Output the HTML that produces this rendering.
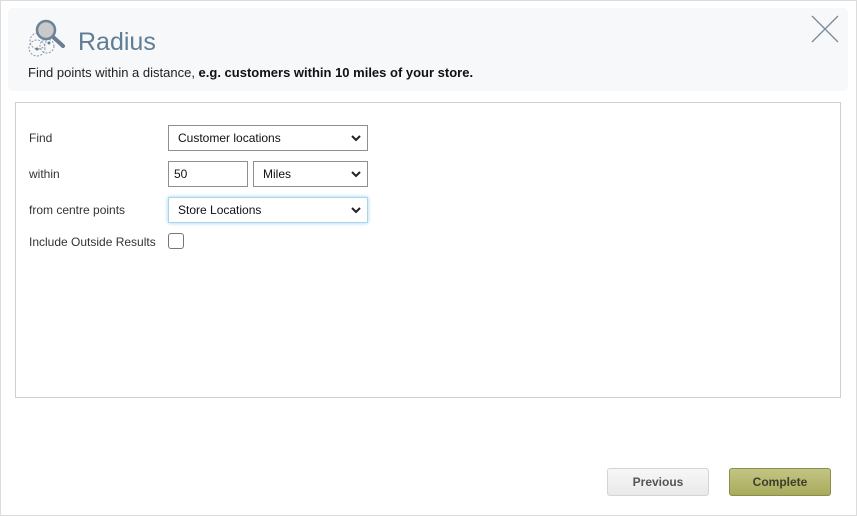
<!DOCTYPE html>
<html><head><meta charset="utf-8"><style>
*{box-sizing:border-box;margin:0;padding:0}
body{width:857px;height:516px;background:#fff;font-family:"Liberation Sans",Arial,sans-serif;position:relative;overflow:hidden}
.frame{position:absolute;left:0;top:0;width:857px;height:516px;border:1px solid #dcdcdc}
.hdr{position:absolute;left:8px;top:8px;width:840px;height:83px;background:#f6f8fa;border-radius:4px}
.title{position:absolute;left:78px;top:28px;font-size:25px;color:#5f7d95}
.sub{position:absolute;left:28px;top:65px;font-size:13px;color:#222}
.sub b{color:#111}
.box{position:absolute;left:15px;top:102px;width:826px;height:296px;border:1px solid #cfcfcf}
.lbl{position:absolute;left:29px;font-size:12px;color:#333}
.sel,.inp{position:absolute;height:26px;border:1px solid #8f8f8f;background:#fff;font-size:12px;color:#111;padding:0 9px;line-height:24px}
.sel svg{position:absolute;right:6px;top:9px}
.btn{position:absolute;top:468px;height:28px;border-radius:3px;font-size:12px;font-weight:bold;text-align:center;line-height:26px}
</style></head><body>
<div class="frame"></div>
<div class="hdr"></div>
<svg style="position:absolute;left:27px;top:19px" width="40" height="38" viewBox="0 0 40 38">
<circle cx="11" cy="22" r="8" fill="none" stroke="#8a99a8" stroke-dasharray="2 1.5"/>
<circle cx="10" cy="29" r="8" fill="none" stroke="#8a99a8" stroke-dasharray="2 1.5"/>
<circle cx="20" cy="27" r="7" fill="none" stroke="#8a99a8" stroke-dasharray="2 1.5"/>
<circle cx="10" cy="30" r="1.5" fill="#6b7d90"/><circle cx="22" cy="24" r="1.5" fill="#6b7d90"/><circle cx="13" cy="15" r="1.5" fill="#6b7d90"/>
<line x1="25" y1="17" x2="36" y2="27" stroke="#6b7d90" stroke-width="4" stroke-linecap="round"/>
<circle cx="19" cy="11" r="9" fill="#c9c9c9" stroke="#6b8299" stroke-width="2.5"/>
</svg>
<div class="title">Radius</div>
<div class="sub">Find points within a distance, <b>e.g. customers within 10 miles of your store.</b></div>
<svg style="position:absolute;left:811px;top:15px" width="28" height="28"><path d="M1 1L27 27M27 1L1 27" stroke="#7a8a9a" stroke-width="1.3"/></svg>
<div class="box"></div>
<div class="lbl" style="top:131px">Find</div>
<div class="lbl" style="top:167px">within</div>
<div class="lbl" style="top:203px">from centre points</div>
<div class="lbl" style="top:235px">Include Outside Results</div>
<div class="sel" style="left:168px;top:125px;width:200px">Customer locations<svg width="10" height="7"><path d="M1 1L5 5L9 1" stroke="#222" stroke-width="2" fill="none"/></svg></div>
<div class="inp" style="left:168px;top:161px;width:80px;padding-left:5px">50</div>
<div class="sel" style="left:253px;top:161px;width:115px">Miles<svg width="10" height="7"><path d="M1 1L5 5L9 1" stroke="#222" stroke-width="2" fill="none"/></svg></div>
<div class="sel" style="left:168px;top:197px;width:200px;border-color:#a8d4ec;box-shadow:0 0 4px #9fd3ef">Store Locations<svg width="10" height="7"><path d="M1 1L5 5L9 1" stroke="#222" stroke-width="2" fill="none"/></svg></div>
<div style="position:absolute;left:168px;top:233px;width:16px;height:16px;border:1px solid #777;border-radius:3px;background:#fff"></div>
<div class="btn" style="left:607px;width:102px;border:1px solid #d4d4d4;background:linear-gradient(#f7f7f7,#e9e9e9);color:#555">Previous</div>
<div class="btn" style="left:729px;width:102px;border:1px solid #8a8e48;background:linear-gradient(#c3c585,#a8ab5c);color:#3e3e2a">Complete</div>
</body></html>
